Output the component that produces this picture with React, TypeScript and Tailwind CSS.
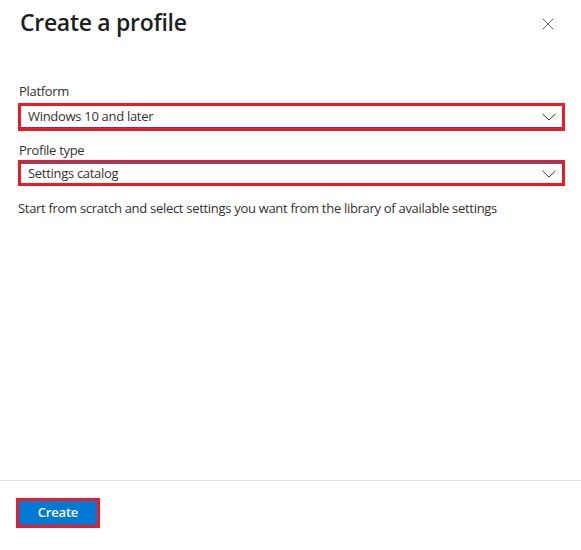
import React from "react";

function Chevron() {
  return (
    <svg width="14" height="8" viewBox="0 0 14 8" fill="none">
      <path d="M0.5 0.8 L7 7 L13.5 0.8" stroke="#3b3a39" strokeWidth="1" />
    </svg>
  );
}

function Field({
  label,
  value,
  topLine,
  boxCls,
}: {
  label: string;
  value: string;
  topLine?: boolean;
  boxCls: string;
}) {
  return (
    <div className="flex flex-col">
      <div className="text-[13px] tracking-[-0.3px] leading-[18px] text-[#323130] pl-[1px]">{label}</div>
      <div className={"border-[3px] border-[#ed1c24] flex " + boxCls}>
        <div
          className={
            "flex-1 flex items-center justify-between pl-[7px] pr-[6px] " +
            (topLine ? "border-t border-[#0078d4]" : "border-b border-[#6b2fa0]")
          }
        >
          <span className="text-[13px] tracking-[-0.3px] text-[#323130]">{value}</span>
          <Chevron />
        </div>
      </div>
    </div>
  );
}

export default function App() {
  return (
    <div
      className="w-[581px] h-[550px] bg-white flex flex-col"
      style={{ fontFamily: '"Open Sans", "Noto Sans", sans-serif' }}
    >
      <div className="flex items-start justify-between pl-[20px] pr-[26px] pt-[6px] h-[70px]">
        <h1 className="text-[23px] tracking-[-0.3px] leading-[32px] font-semibold text-[#201f1e]">
          Create a profile
        </h1>
        <button className="mt-[11px] w-[14px] h-[14px] flex items-center justify-center">
          <svg width="12" height="12" viewBox="0 0 12 12">
            <path d="M0.5 0.5 L11.5 11.5 M11.5 0.5 L0.5 11.5" stroke="#605e5c" strokeWidth="1" />
          </svg>
        </button>
      </div>
      <div className="flex flex-col gap-[10px] pl-[18px] pr-[16px] mt-[12px]">
        <Field label="Platform" value="Windows 10 and later" boxCls="mt-[3px] h-[28px]" />
        <Field label="Profile type" value="Settings catalog" topLine boxCls="mt-[1px] h-[26px]" />
      </div>
      <p className="px-[18px] mt-[12px] text-[13px] tracking-[-0.3px] leading-[20px] text-[#323130]">
        Start from scratch and select settings you want from the library of available settings
      </p>
      <div className="flex-1" />
      <div className="border-t border-[#e0e0e0] h-[70px] pl-[16px] pt-[17px]">
        <div className="w-[84px] h-[30px] border-[3px] border-[#ed1c24]">
          <button className="w-full h-full bg-[#0078d4] text-white text-[13px] tracking-[-0.2px] font-semibold flex items-center justify-center">
            Create
          </button>
        </div>
      </div>
    </div>
  );
}
